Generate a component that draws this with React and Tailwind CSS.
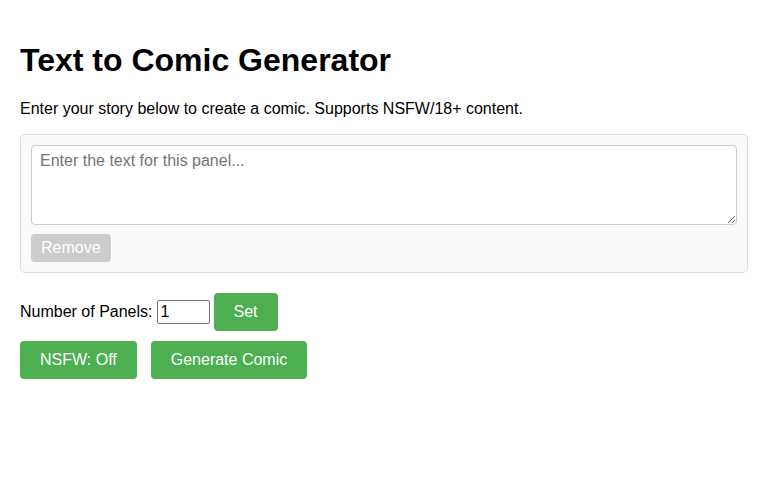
import React, { useState } from 'react';

/**
 * ComicGenerator
 * Panel editor with panel count and NSFW toggle.
 */
export default function App() {
  const [count, setCount] = useState('1');
  const [panels, setPanels] = useState(['']);
  const [nsfw, setNsfw] = useState(false);

  const greenBtn =
    'h-[38px] px-5 rounded-[4px] bg-[#4caf50] text-white text-[16px] leading-[18px]';

  return (
    <div className="min-h-[480px] bg-white p-5 font-['Liberation_Sans',Arial,sans-serif] text-black">
      <h1 className="mt-[22px] mb-[22px] text-[32px] leading-[36px] font-bold">
        Text to Comic Generator
      </h1>
      <p className="mb-4 text-[16px] leading-[18px]">
        Enter your story below to create a comic. Supports NSFW/18+ content.
      </p>

      {/* Panels */}
      {panels.map((text, idx) => (
        <div
          key={idx}
          className="mb-5 flex flex-col items-start gap-[9px] rounded-[5px] border border-[#ddd] bg-[#f9f9f9] p-[10px]"
        >
          <textarea
            value={text}
            onChange={(e) =>
              setPanels(panels.map((p, i) => (i === idx ? e.target.value : p)))
            }
            placeholder="Enter the text for this panel..."
            className="block h-[80px] w-full rounded-[4px] border border-[#ccc] bg-white px-2 py-[6px] text-[16px] leading-[18px] text-black placeholder:text-[#757575]"
          />
          <button
            disabled={panels.length <= 1}
            className="h-[28px] rounded-[4px] bg-[#ccc] px-[10px] text-[16px] leading-[18px] text-white"
          >
            Remove
          </button>
        </div>
      ))}

      {/* Panel count */}
      <div className="mb-[10px] flex items-center">
        <label className="text-[16px] leading-[18px]">Number of Panels:</label>
        <input
          type="number"
          value={count}
          onChange={(e) => setCount(e.target.value)}
          className="ml-[4px] h-[24px] w-[53px] rounded-[2px] border border-[#767676] bg-white px-[3px] text-[16px] leading-[18px] [appearance:textfield] [&::-webkit-inner-spin-button]:appearance-none"
        />
        <button
          onClick={() => setPanels(Array.from({ length: Math.max(1, +count || 1) }, (_, i) => panels[i] || ''))}
          className={`ml-1 ${greenBtn}`}
        >
          Set
        </button>
      </div>

      {/* Actions */}
      <div className="flex items-center gap-[14px]">
        <button onClick={() => setNsfw(!nsfw)} className={greenBtn}>
          NSFW: {nsfw ? 'On' : 'Off'}
        </button>
        <button className={greenBtn}>Generate Comic</button>
      </div>
    </div>
  );
}
